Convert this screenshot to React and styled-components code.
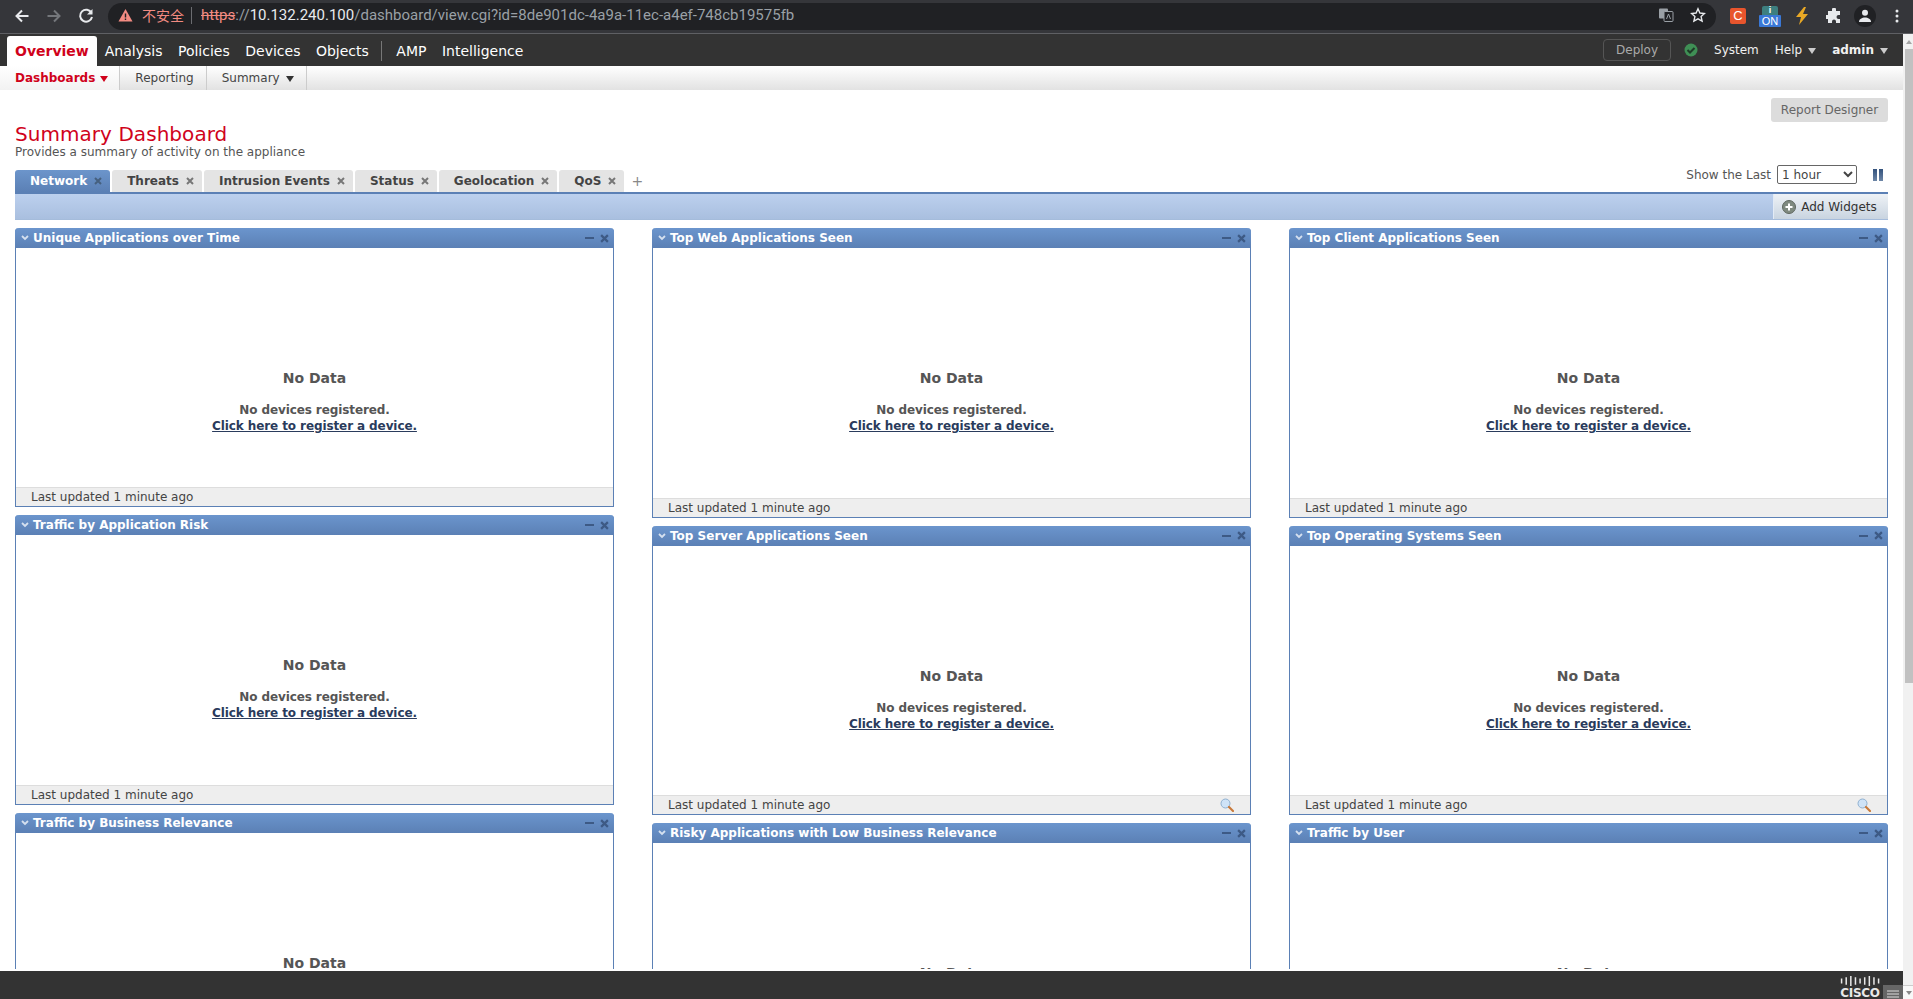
import React from 'react';
import styled, { createGlobalStyle } from 'styled-components';

const Global = createGlobalStyle`
  html, body { margin: 0; padding: 0; height: 100%; overflow: hidden; background: #fff; }
  body { font-family: "DejaVu Sans", Verdana, sans-serif; font-size: 12px; color: #444; }
  * { box-sizing: border-box; }
`;

const Page = styled.div`
  width: 1913px;
  height: 999px;
  display: flex;
  flex-direction: column;
  overflow: hidden;
`;

/* browser chrome */
const Toolbar = styled.div`
  height: 34px;
  flex: none;
  display: flex;
  align-items: center;
  background: #35363a;
  border-bottom: 1px solid #5f6064;
  padding-bottom: 1px;
`;

const NavIcons = styled.div`
  width: 108px;
  flex: none;
  display: flex;
  align-items: center;
  padding-left: 14px;
  gap: 16px;
`;

const AddressBar = styled.div`
  width: 1608px;
  height: 27px;
  flex: none;
  display: flex;
  align-items: center;
  border-radius: 14px;
  background: #202124;
  padding: 0 10px 2px 10px;
  font-family: Roboto, "Noto Sans CJK SC", sans-serif;
  font-size: 15px;
  color: #9aa0a6;
  white-space: nowrap;
`;

const Insecure = styled.span`
  margin-left: 9px;
  color: #f28b82;
  font-family: "Noto Sans CJK SC", sans-serif;
  font-size: 14px;
  padding-right: 7px;
  margin-right: 9px;
  border-right: 1px solid #6b6c70;
  line-height: 17px;
`;

const Scheme = styled.span`
  color: #f28b82;
  text-decoration: line-through;
`;

const Host = styled.span`
  color: #e8eaed;
`;

const UrlText = styled.span`
  flex: 1;
`;

const ToolbarRight = styled.div`
  flex: 1;
  display: flex;
  align-items: center;
  padding-left: 14px;
`;

const ExtC = styled.div`
  width: 16px;
  height: 16px;
  border-radius: 2px;
  background: #e8552d;
  color: #fff;
  font: 13px/16px "Liberation Sans", sans-serif;
  text-align: center;
`;

const ExtOn = styled.div`
  width: 22px;
  margin-left: 13px;
  display: flex;
  flex-direction: column;
  align-items: center;
`;

const ExtOnTop = styled.div`
  width: 16px;
  height: 9px;
  background: #3d7f7f;
  color: #fff;
  border-radius: 2px 2px 0 0;
  font: bold 9px/9px "Liberation Sans", sans-serif;
  text-align: center;
`;

const ExtOnBottom = styled.div`
  width: 22px;
  height: 12px;
  background: #3a78d6;
  color: #fff;
  border-radius: 1px;
  font: 11px/12px "Liberation Sans", sans-serif;
  text-align: center;
`;

const Avatar = styled.div`
  width: 22px;
  height: 22px;
  margin-left: 12px;
  border-radius: 50%;
  background: #202124;
  display: flex;
  align-items: center;
  justify-content: center;
`;

const Stage = styled.div`
  flex: 1;
  min-height: 0;
  display: flex;
`;

const Main = styled.div`
  width: 1903px;
  flex: none;
  display: flex;
  flex-direction: column;
`;

/* scrollbar */
const ScrollTrack = styled.div`
  flex: 1;
  background: #f1f1f1;
  display: flex;
  flex-direction: column;
`;

const ScrollArrow = styled.div`
  height: 15px;
  padding-left: 2px;
  display: flex;
  align-items: center;
  justify-content: center;
  &::before {
    content: '';
    border-left: 3px solid transparent;
    border-right: 3px solid transparent;
    border-bottom: 4px solid #a3a3a3;
  }
`;

const ScrollThumb = styled.div`
  height: 634px;
  margin-left: 2px;
  background: #c1c1c1;
`;

const CornerTab = styled.div`
  margin-top: auto;
  height: 14px;
  display: flex;
  align-items: center;
  justify-content: flex-end;
  padding-right: 1px;
  border-top: 1px solid #ccc;
  background: #f8f8f8;
  &::before {
    content: '';
    border-left: 3px solid transparent;
    border-right: 3px solid transparent;
    border-top: 4px solid #888;
  }
`;

/* app nav */
const TopNav = styled.div`
  height: 32px;
  flex: none;
  display: flex;
  align-items: flex-end;
  background: #333;
  padding-left: 7px;
  font-size: 14px;
  color: #fff;
`;

const MainTab = styled.div`
  height: 30px;
  padding: 0 8px;
  display: flex;
  align-items: center;
  border-radius: 3px 3px 0 0;
  background: #fff;
  color: #d0021b;
  font-weight: bold;
  margin-right: 8px;
`;

const NavLink = styled.div`
  height: 30px;
  display: flex;
  align-items: center;
  margin-right: 15.5px;
  color: #fff;
`;

const NavDivider = styled.div`
  width: 1px;
  height: 20px;
  margin: 0 14px 5px -3px;
  background: #777;
`;

const NavRight = styled.div`
  margin-left: auto;
  height: 32px;
  display: flex;
  align-items: center;
  padding-right: 15px;
  font-size: 12px;
`;

const DeployButton = styled.div`
  width: 68px;
  height: 22px;
  display: flex;
  align-items: center;
  justify-content: center;
  border: 1px solid #555;
  border-radius: 4px;
  color: #aaa;
  margin-right: 13px;
`;

const NavMenu = styled.div`
  margin-left: ${(p) => p.$gap}px;
  font-weight: ${(p) => (p.$bold ? 'bold' : 'normal')};
  display: flex;
  align-items: center;
  color: #f0f0f0;
`;

const Caret = styled.span`
  display: inline-block;
  margin-left: ${(p) => p.$gap || 6}px;
  margin-top: 2px;
  border-left: 4px solid transparent;
  border-right: 4px solid transparent;
  border-top: 6px solid ${(p) => p.$color || '#ccc'};
`;

const SubNav = styled.div`
  height: 24px;
  flex: none;
  display: flex;
  background: linear-gradient(#fff, #e2e2e2);
`;

const SubTab = styled.div`
  height: 100%;
  display: flex;
  align-items: center;
  padding: 0 ${(p) => (p.$active ? 11 : 12)}px 0 15px;
  border-right: 1px solid #ccc;
  color: ${(p) => (p.$active ? '#d0021b' : '#444')};
  font-weight: ${(p) => (p.$active ? 'bold' : 'normal')};
  background: ${(p) => (p.$active ? 'linear-gradient(#fff, #f2f2f2)' : 'transparent')};
`;

/* page body */
const Content = styled.div`
  flex: 1;
  min-height: 0;
  overflow: hidden;
  padding: 0 15px;
  margin-bottom: 2px;
`;

const Heading = styled.div`
  height: 78px;
  display: flex;
  justify-content: space-between;
  align-items: flex-start;
`;

const HeadingText = styled.div`
  padding-top: 33px;
`;

const Title = styled.div`
  font-size: 20px;
  line-height: 22px;
  letter-spacing: 0.05px;
  color: #d0021b;
`;

const Subtitle = styled.div`
  font-size: 12px;
  line-height: 14px;
  color: #555;
`;

const ReportButton = styled.div`
  margin-top: 8px;
  width: 117px;
  height: 24px;
  display: flex;
  align-items: center;
  justify-content: center;
  background: #dcdcdc;
  border-radius: 3px;
  color: #666;
`;

const TabRow = styled.div`
  height: 24px;
  display: flex;
  align-items: flex-end;
  justify-content: space-between;
`;

const Tabs = styled.div`
  display: flex;
  align-items: flex-end;
  gap: 2px;
`;

const Tab = styled.div`
  height: 22px;
  display: flex;
  align-items: center;
  padding: 0 8px 0 15px;
  border-radius: 3px 3px 0 0;
  font-weight: bold;
  color: ${(p) => (p.$active ? '#fff' : '#444')};
  background: ${(p) => (p.$active ? 'linear-gradient(#6c95cb, #5b80b5)' : '#e4e4e4')};
  white-space: nowrap;
`;

const TabClose = styled.span`
  margin-left: 7px;
  display: flex;
  color: ${(p) => (p.$active ? '#46607f' : '#777')};
`;

const AddTab = styled.div`
  margin-left: 5px;
  height: 22px;
  line-height: 22px;
  color: #888;
  font-size: 14px;
`;

const RangeControls = styled.div`
  display: flex;
  align-items: center;
  height: 24px;
  padding: 0 3px 11px 0;
  color: #555;
`;

const RangeSelect = styled.select`
  width: 80px;
  height: 19px;
  margin: 0 16px 0 6px;
  padding: 0;
  border: 1px solid #666;
  border-radius: 2px;
  background: #fff;
  color: #444;
  font-family: inherit;
  font-size: 12px;
`;

const PauseBar = styled.span`
  width: 4px;
  height: 12px;
  margin-right: 2px;
  background: linear-gradient(#33527c, #6d86a6);
`;

const ToolStrip = styled.div`
  height: 28px;
  display: flex;
  justify-content: flex-end;
  border-top: 2px solid #5b80b5;
  border-bottom: 1px solid #a5bcdb;
  background: linear-gradient(#bcd0ee, #a9bfdf);
`;

const AddWidgets = styled.div`
  width: 115px;
  display: flex;
  align-items: center;
  justify-content: center;
  gap: 5px;
  padding-right: 3px;
  border-left: 1px solid #e3ebf6;
  background: linear-gradient(#eef2f6, #c9d4e0);
  color: #333;
`;

const Columns = styled.div`
  margin-top: 8px;
  display: grid;
  grid-template-columns: repeat(3, 599px);
  column-gap: 38px;
`;

const Column = styled.div`
  display: flex;
  flex-direction: column;
  gap: 8px;
`;

const Widget = styled.div`
  height: ${(p) => p.$height}px;
  flex: none;
  display: flex;
  flex-direction: column;
  border: 1px solid #5b80b5;
  border-top: none;
  border-radius: 4px 4px 0 0;
  background: #fff;
`;

const WidgetHeader = styled.div`
  height: 20px;
  flex: none;
  margin: 0 -1px;
  display: flex;
  align-items: center;
  padding: 0 5px 0 6px;
  border-radius: 4px 4px 0 0;
  background: linear-gradient(#6b95cd, #5b80b5);
  color: #fff;
  font-weight: bold;
  font-size: 12px;
`;

const WidgetTitle = styled.span`
  flex: 1;
  margin-left: 4px;
`;

const HeaderTools = styled.span`
  display: flex;
  align-items: center;
  gap: 6px;
`;

const WidgetBody = styled.div`
  flex: 1;
  min-height: 0;
  padding-top: 121px;
  text-align: center;
  font-weight: bold;
  letter-spacing: -0.1px;
`;

const NoData = styled.div`
  font-size: 14px;
  line-height: 18px;
  letter-spacing: 0;
  color: #555;
  margin-bottom: 15px;
`;

const BodyLine = styled.div`
  line-height: 16px;
  color: #555;
`;

const RegisterLink = styled.a`
  display: block;
  line-height: 16px;
  color: #2a3b5c;
  text-decoration: underline;
`;

const WidgetFooter = styled.div`
  height: 19px;
  flex: none;
  display: flex;
  align-items: center;
  justify-content: space-between;
  padding: 0 16px 0 15px;
  border-top: 1px solid #ddd;
  background: #eee;
  color: #444;
`;

/* bottom bar */
const Footer = styled.div`
  height: 28px;
  flex: none;
  display: flex;
  justify-content: flex-end;
  background: #333;
  overflow: hidden;
`;

const CiscoLogo = styled.div`
  width: 46px;
  margin-top: 5px;
  display: flex;
  flex-direction: column;
  align-items: center;
  gap: 1px;
  color: #e8e8e8;
  font: bold 12px/12px "DejaVu Sans", sans-serif;
  letter-spacing: -0.3px;
`;

const FooterBox = styled.div`
  width: 20px;
  margin-top: 14px;
  display: flex;
  align-items: flex-end;
  justify-content: center;
  padding-bottom: 1px;
  background: #666;
`;

const widgets = [
  [
    { title: 'Unique Applications over Time', height: 279 },
    { title: 'Traffic by Application Risk', height: 290 },
    { title: 'Traffic by Business Relevance', height: 290 },
  ],
  [
    { title: 'Top Web Applications Seen', height: 289.5 },
    { title: 'Top Server Applications Seen', height: 289.5, search: true },
    { title: 'Risky Applications with Low Business Relevance', height: 290 },
  ],
  [
    { title: 'Top Client Applications Seen', height: 289.5 },
    { title: 'Top Operating Systems Seen', height: 289.5, search: true },
    { title: 'Traffic by User', height: 290 },
  ],
];

const tabs = [
  { name: 'Network', active: true },
  { name: 'Threats' },
  { name: 'Intrusion Events' },
  { name: 'Status' },
  { name: 'Geolocation' },
  { name: 'QoS' },
];

function CloseIcon({ color = 'currentColor', size = 8 }) {
  return (
    <svg width={size} height={size} viewBox="0 0 8 8">
      <path d="M1 1l6 6M7 1l-6 6" stroke={color} strokeWidth="2" fill="none" />
    </svg>
  );
}

function SearchIcon() {
  return (
    <svg width="14" height="14" viewBox="0 0 14 14">
      <circle cx="5.5" cy="5.5" r="4.5" fill="#cfe3f7" stroke="#8fb0d0" />
      <path d="M9 9l4 4" stroke="#c8793a" strokeWidth="2.2" strokeLinecap="round" />
    </svg>
  );
}

function PanelWidget({ title, height, search }) {
  return (
    <Widget $height={height}>
      <WidgetHeader>
        <svg width="8" height="6" viewBox="0 0 8 6">
          <path d="M1 1l3 3 3-3" stroke="#d5e0ef" strokeWidth="1.8" fill="none" />
        </svg>
        <WidgetTitle>{title}</WidgetTitle>
        <HeaderTools>
          <svg width="9" height="8" viewBox="0 0 9 8">
            <rect y="3" width="9" height="2" fill="#3d5a85" />
          </svg>
          <CloseIcon color="#3d5a85" size={9} />
        </HeaderTools>
      </WidgetHeader>
      <WidgetBody>
        <NoData>No Data</NoData>
        <BodyLine>No devices registered.</BodyLine>
        <RegisterLink>Click here to register a device.</RegisterLink>
      </WidgetBody>
      <WidgetFooter>
        Last updated 1 minute ago
        {search && <SearchIcon />}
      </WidgetFooter>
    </Widget>
  );
}

export default function App() {
  return (
    <Page>
      <Global />
      <Toolbar>
        <NavIcons>
          <svg width="16" height="16" viewBox="0 0 16 16">
            <path d="M14.5 8H2.5M8 2.5L2.5 8 8 13.5" stroke="#e8eaed" strokeWidth="2" fill="none" />
          </svg>
          <svg width="16" height="16" viewBox="0 0 16 16">
            <path d="M1.5 8h12M8 2.5L13.5 8 8 13.5" stroke="#74777b" strokeWidth="2" fill="none" />
          </svg>
          <svg width="16" height="16" viewBox="0 0 16 16">
            <path d="M13.5 5A6 6 0 1 0 14 9" stroke="#e8eaed" strokeWidth="2" fill="none" />
            <path d="M14.5 1v5.5H9z" fill="#e8eaed" />
          </svg>
        </NavIcons>
        <AddressBar>
          <svg width="15" height="14" viewBox="0 0 15 14">
            <path d="M7.5 1L14.5 13.5H.5z" fill="#f28b82" />
            <path d="M7.5 5.5v4M7.5 10.5v1.6" stroke="#202124" strokeWidth="1.4" />
          </svg>
          <Insecure>不安全</Insecure>
          <UrlText>
            <Scheme>https</Scheme>://<Host>10.132.240.100</Host>/dashboard/view.cgi?id=8de901dc-4a9a-11ec-a4ef-748cb19575fb
          </UrlText>
          <svg width="16" height="16" viewBox="0 0 16 16">
            <rect x="1" y="1.5" width="9" height="10" rx="1" fill="#9aa0a6" />
            <rect x="6" y="4.5" width="9" height="10" rx="1" fill="#202124" stroke="#9aa0a6" />
            <path d="M8.5 12l2-5 2 5" stroke="#9aa0a6" fill="none" />
          </svg>
          <svg style={{ marginLeft: 16 }} width="16" height="16" viewBox="0 0 16 16">
            <path d="M8 1.8l1.9 4.2 4.6.5-3.4 3.1 1 4.6L8 11.8l-4.1 2.4 1-4.6-3.4-3.1 4.6-.5z" stroke="#e8eaed" strokeWidth="1.4" fill="none" />
          </svg>
        </AddressBar>
        <ToolbarRight>
          <ExtC>C</ExtC>
          <ExtOn>
            <ExtOnTop>i</ExtOnTop>
            <ExtOnBottom>ON</ExtOnBottom>
          </ExtOn>
          <svg style={{ marginLeft: 14 }} width="14" height="18" viewBox="0 0 14 18">
            <path d="M9 0L1 10h5l-2 8 9-11H8l3-7z" fill="#e8a825" />
          </svg>
          <svg style={{ marginLeft: 17 }} width="16" height="16" viewBox="0 0 16 16">
            <path d="M6 1.5a2 2 0 0 1 4 0V3h4v4h-1.5a2 2 0 0 0 0 4H14v4h-4v-1.5a2 2 0 0 0-4 0V15H2v-4H.5a2 2 0 0 1 0-4H2V3h4z" fill="#e8eaed" />
          </svg>
          <Avatar>
            <svg width="14" height="14" viewBox="0 0 14 14">
              <circle cx="7" cy="3.8" r="3" fill="#e8eaed" />
              <path d="M1 13c0-3 3-4.5 6-4.5s6 1.5 6 4.5z" fill="#e8eaed" />
            </svg>
          </Avatar>
          <svg style={{ marginLeft: 19 }} width="4" height="14" viewBox="0 0 4 14">
            <circle cx="2" cy="2" r="1.5" fill="#e8eaed" />
            <circle cx="2" cy="7" r="1.5" fill="#e8eaed" />
            <circle cx="2" cy="12" r="1.5" fill="#e8eaed" />
          </svg>
        </ToolbarRight>
      </Toolbar>
      <Stage>
        <Main>
          <TopNav>
            <MainTab>Overview</MainTab>
            <NavLink>Analysis</NavLink>
            <NavLink>Policies</NavLink>
            <NavLink>Devices</NavLink>
            <NavLink>Objects</NavLink>
            <NavDivider />
            <NavLink>AMP</NavLink>
            <NavLink>Intelligence</NavLink>
            <NavRight>
              <DeployButton>Deploy</DeployButton>
              <svg width="14" height="14" viewBox="0 0 14 14">
                <circle cx="7" cy="7" r="6.5" fill="#3f8f55" />
                <path d="M3.5 7l2.5 2.5 4.5-4.5" stroke="#1f3a28" strokeWidth="2" fill="none" />
              </svg>
              <NavMenu $gap={16}>System</NavMenu>
              <NavMenu $gap={16}>Help<Caret /></NavMenu>
              <NavMenu $gap={16} $bold>admin<Caret /></NavMenu>
            </NavRight>
          </TopNav>
          <SubNav>
            <SubTab $active>Dashboards<Caret $color="#d0021b" $gap={5} /></SubTab>
            <SubTab>Reporting</SubTab>
            <SubTab>Summary<Caret $color="#333" $gap={6} /></SubTab>
          </SubNav>
          <Content>
            <Heading>
              <HeadingText>
                <Title>Summary Dashboard</Title>
                <Subtitle>Provides a summary of activity on the appliance</Subtitle>
              </HeadingText>
              <ReportButton>Report Designer</ReportButton>
            </Heading>
            <TabRow>
              <Tabs>
                {tabs.map((t) => (
                  <Tab key={t.name} $active={t.active}>
                    {t.name}
                    <TabClose $active={t.active}><CloseIcon /></TabClose>
                  </Tab>
                ))}
                <AddTab>+</AddTab>
              </Tabs>
              <RangeControls>
                Show the Last
                <RangeSelect defaultValue="1 hour">
                  <option>1 hour</option>
                </RangeSelect>
                <PauseBar />
                <PauseBar />
              </RangeControls>
            </TabRow>
            <ToolStrip>
              <AddWidgets>
                <svg width="14" height="14" viewBox="0 0 14 14">
                  <circle cx="7" cy="7" r="6.5" fill="#7f8a80" stroke="#5e665f" />
                  <path d="M7 3.5v7M3.5 7h7" stroke="#fff" strokeWidth="2" />
                </svg>
                Add Widgets
              </AddWidgets>
            </ToolStrip>
            <Columns>
              {widgets.map((col, i) => (
                <Column key={i}>
                  {col.map((w) => (
                    <PanelWidget key={w.title} {...w} />
                  ))}
                </Column>
              ))}
            </Columns>
          </Content>
          <Footer>
            <CiscoLogo>
              <svg width="46" height="12" viewBox="0 0 46 12">
                {[6, 9, 12, 9, 6, 9, 12, 9, 6].map((h, i) => (
                  <rect key={i} x={i * 5.55} y={6 - h / 2} width="1.8" height={h} fill="#e8e8e8" />
                ))}
              </svg>
              CISCO
            </CiscoLogo>
            <FooterBox>
              <svg width="16" height="8" viewBox="0 0 16 8">
                <path d="M2 1h12M2 4h12M2 7h12" stroke="#ddd" />
              </svg>
            </FooterBox>
          </Footer>
        </Main>
        <ScrollTrack>
          <ScrollArrow />
          <ScrollThumb />
          <CornerTab />
        </ScrollTrack>
      </Stage>
    </Page>
  );
}
